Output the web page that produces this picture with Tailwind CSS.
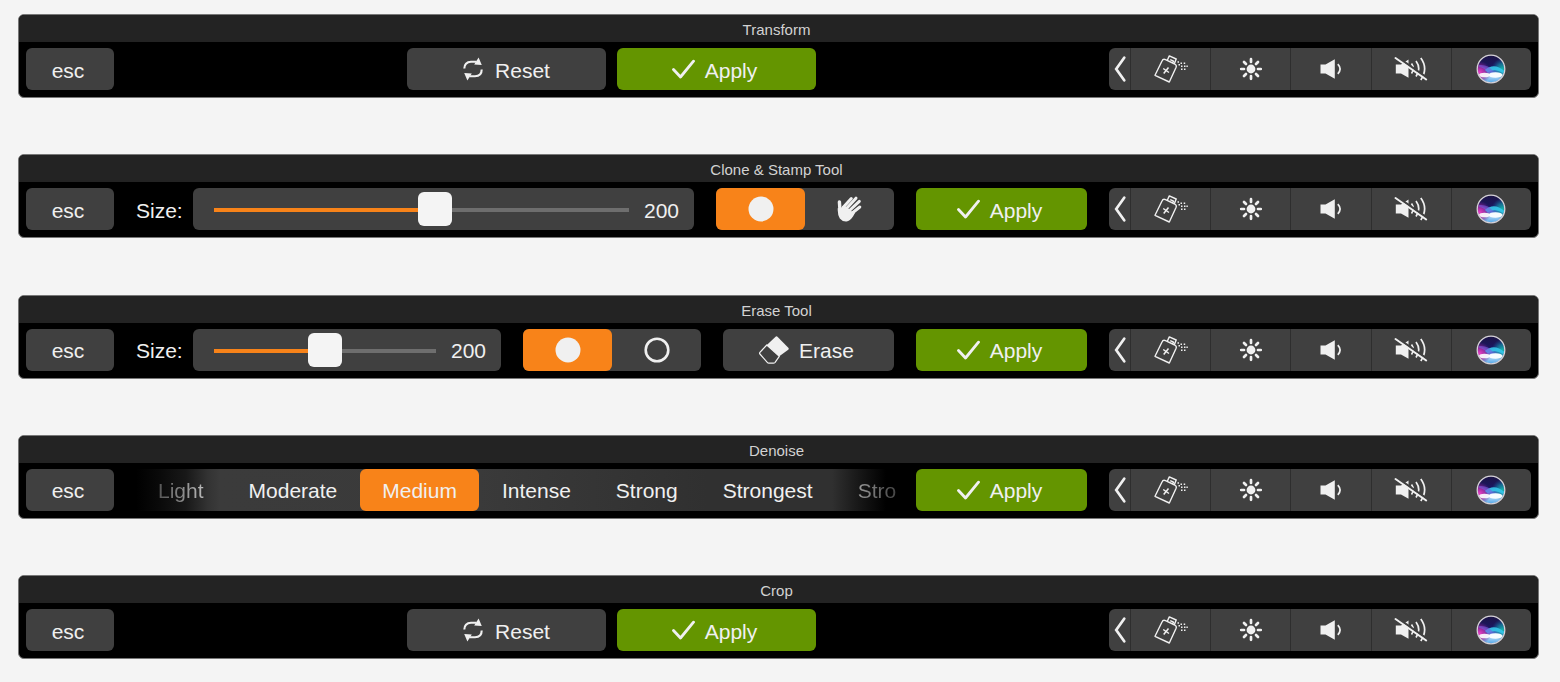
<!DOCTYPE html>
<html lang="en">
<head>
<meta charset="utf-8">
<meta name="viewport" content="width=device-width, initial-scale=1">
<title>Touch Bar layouts</title>
<script src="https://cdn.jsdelivr.net/npm/@tailwindcss/browser@4"></script>
</head>
<body class="bg-[#f4f4f4] font-['Liberation_Sans',Arial,sans-serif] text-[21px] leading-6 text-[#f0f0f0]">

<!-- Shared icons -->
<svg class="absolute size-0" aria-hidden="true">
  <defs>
    <radialGradient id="siri-pink" cx="0.08" cy="0.62" r="0.42"><stop offset="0" stop-color="#e83cc0"/><stop offset="0.5" stop-color="#a8259c" stop-opacity="0.8"/><stop offset="1" stop-color="#5a1a8a" stop-opacity="0"/></radialGradient>
    <radialGradient id="siri-teal" cx="0.92" cy="0.5" r="0.4"><stop offset="0" stop-color="#16b5a8"/><stop offset="0.5" stop-color="#158fa8" stop-opacity="0.7"/><stop offset="1" stop-color="#1560a0" stop-opacity="0"/></radialGradient>
    <linearGradient id="siri-base" x1="0" y1="0" x2="0" y2="1"><stop offset="0" stop-color="#1c1545"/><stop offset="0.4" stop-color="#1b1660"/><stop offset="0.6" stop-color="#5a6fd6"/><stop offset="0.75" stop-color="#b8dcf8"/><stop offset="1" stop-color="#55a8e8"/></linearGradient>
    <clipPath id="siri-clip"><circle cx="15" cy="15" r="13.5"/></clipPath>

    <symbol id="reset" viewBox="0 0 20 24">
      <path d="M1.3 11.500C1.300 7.500 3.600 4.800 8 4.800H13.500M18.700 12.500C18.700 16.500 16.400 19.200 12 19.200H6.500" fill="none" stroke="currentColor" stroke-width="2.100"/>
      <path d="M15.600 0.500L18.800 8L11.200 7.500ZM4.400 23.500L1.200 16L8.800 16.500Z" fill="currentColor"/>
    </symbol>
    <symbol id="check" viewBox="0 0 23 20">
      <path d="M1.500 10.500L8.500 18L21.500 2.200" fill="none" stroke="currentColor" stroke-width="2.800" stroke-linecap="round" stroke-linejoin="round"/>
    </symbol>
    <symbol id="eraser" viewBox="0 0 30 28">
      <path d="M16.300 0.900Q17.500 -0.200 18.700 0.900L29.300 11.700Q30.300 12.800 29.200 13.800L20.300 20.300L7.800 9Z" fill="currentColor"/>
      <path d="M7.800 9L0.900 16.400Q0.300 17.200 0.900 18L8.500 26.600Q9 27.200 9.800 27.200H14.500Q15.300 27.200 15.900 26.600L20.300 20.300Z" fill="none" stroke="currentColor" stroke-width="1.200" stroke-linejoin="round"/>
    </symbol>
    <symbol id="hand" viewBox="0 0 25 26">
      <g fill="none" stroke="currentColor" stroke-linecap="round">
        <path d="M2.400 6L3 14" stroke-width="3.400"/>
        <path d="M6.500 11L14.300 2.500" stroke-width="3"/>
        <path d="M9.500 12.500L19 2.200" stroke-width="3"/>
        <path d="M12 15L22.300 5.300" stroke-width="3"/>
        <path d="M14 18L22.800 11" stroke-width="3"/>
      </g>
      <path d="M0.800 12L4 11.500Q5 11.500 5.500 9.900L9 10.500L16.500 17L18 17L16 20.500Q13 24.800 9.500 25.500Q5.500 25.800 2.800 22.500Q0.800 19.500 0.700 14Z" fill="currentColor"/>
    </symbol>
    <symbol id="dot" viewBox="0 0 26 26"><circle cx="13" cy="13" r="12.500" fill="currentColor"/></symbol>
    <symbol id="ring" viewBox="0 0 26 26"><circle cx="13" cy="13" r="11.300" fill="none" stroke="currentColor" stroke-width="2.600"/></symbol>
    <symbol id="chevron" viewBox="0 0 12 26">
      <path d="M10.200 1.700L2.200 13L10.200 24.300" fill="none" stroke="currentColor" stroke-width="2.700" stroke-linecap="round"/>
    </symbol>
    <symbol id="spray" viewBox="0 0 34 28">
      <path d="M1 20.300L8 6Q9 3.600 11.500 4.600L20.800 9Q23 10.200 22 12.500L15.300 27Z M13.300 5.200L15.300 0.900L22.200 4L20.300 8.700M16.200 4.600L19.500 6.200L18.800 7.800" fill="none" stroke="currentColor" stroke-width="1.400" stroke-linejoin="round"/>
      <path d="M9.200 13.500L15 17.500M14.500 12.500L9.700 18.500" fill="none" stroke="currentColor" stroke-width="1.500"/>
      <path d="M23.500 7h1.500M24.500 9.800h1.500M26.500 8.200h1.500M27 11.200h1.500M27 14.200h1.500M29.700 8.200h1.500M30 11.200h1.500M30 14.200h1.500M32.400 11.200h1.400" stroke="currentColor" stroke-width="1.400"/>
    </symbol>
    <symbol id="sun" viewBox="0 0 24 24">
      <circle cx="12" cy="12" r="4.400" fill="currentColor"/>
      <path d="M12 2.200V5M12 19V21.800M2.200 12H5M19 12H21.800M5 5L7 7M17 17L19 19M5 19L7 17M17 7L19 5" stroke="currentColor" stroke-width="2.700" stroke-linecap="round"/>
    </symbol>
    <symbol id="volume" viewBox="0 0 22 20">
      <path d="M0.500 5.500H5.500L14.800 0.200V19.800L5.500 14.500H0.500Z" fill="currentColor"/>
      <path d="M17.800 5.200Q22.400 10 17.800 14.800" fill="none" stroke="currentColor" stroke-width="1.700"/>
    </symbol>
    <symbol id="mute" viewBox="0 0 34 26">
      <path d="M1.800 8.500H7L14.500 3.500V21.800L7 17.500H1.800Z" fill="currentColor"/>
      <path d="M17.500 7.500Q21 12.500 17.500 17.500M22 5Q27.500 12.500 22 20.500M26.800 2Q34.500 12.500 26.800 24" fill="none" stroke="currentColor" stroke-width="1.700"/>
      <path d="M2 0.300L33.500 22" stroke="#404040" stroke-width="2.400"/>
      <path d="M1.500 2L32.200 23.500" stroke="currentColor" stroke-width="2" stroke-linecap="round"/>
    </symbol>
    <symbol id="siri" viewBox="0 0 30 30">
      <circle cx="15" cy="15" r="13.500" fill="url(#siri-base)"/>
      <g clip-path="url(#siri-clip)">
        <circle cx="15" cy="15" r="13.500" fill="url(#siri-pink)"/>
        <circle cx="15" cy="15" r="13.500" fill="url(#siri-teal)"/>
        <path d="M9 16Q18 8 28.500 17L27 19Q19 14 12 18.500Z" fill="#35c6ea" fill-opacity="0.900"/>
        <path d="M3 11Q12 10 17 17L12 19Q9 14 3 13Z" fill="#7a5fe0" fill-opacity="0.600"/>
        <ellipse cx="8.500" cy="21" rx="5.500" ry="2.300" fill="#fff" fill-opacity="0.900"/>
        <ellipse cx="19.500" cy="21" rx="7" ry="2.800" fill="#f6fcff"/>
      </g>
      <circle cx="15" cy="15" r="13.800" fill="none" stroke="#d4d0d8" stroke-width="1.300"/>
    </symbol>
  </defs>
</svg>

<main class="flex min-h-screen flex-col justify-between gap-14 pt-3.5 pr-[21px] pb-[23px] pl-[18px]">

  <!-- Transform -->
  <section class="overflow-hidden rounded-md border border-[#777] bg-black">
    <h2 class="bg-[#232323] pt-[5px] pr-1 pb-0.5 text-center text-[15px] leading-5 text-[#d2d2d2]">Transform</h2>
    <div class="flex h-[55px] items-start gap-[22px] px-[7px] pt-1.5">
      <button class="h-[42px] w-[88px] shrink-0 rounded-md bg-[#404040] pt-[3px] pr-1">esc</button>
      <div class="flex flex-1 justify-center gap-[11px]">
        <button class="flex h-[42px] w-[199px] items-center justify-center gap-3 rounded-md bg-[#404040]"><svg class="h-6 w-5"><use href="#reset"/></svg><span class="pt-[3px]">Reset</span></button>
        <button class="flex h-[42px] w-[199px] items-center justify-center gap-2.5 rounded-md bg-[#649500] pr-1"><svg class="h-5 w-[23px]"><use href="#check"/></svg><span class="pt-[3px]">Apply</span></button>
      </div>
      <div class="flex h-[42px] w-[422px] shrink-0 divide-x divide-[#2e2e2e] overflow-hidden rounded-md bg-[#404040]">
        <button class="grid w-[22px] place-items-center" aria-label="Expand control strip"><svg class="h-[26px] w-3"><use href="#chevron"/></svg></button>
        <button class="grid flex-1 place-items-center" aria-label="Spray"><svg class="h-7 w-[34px]"><use href="#spray"/></svg></button>
        <button class="grid flex-1 place-items-center" aria-label="Brightness"><svg class="size-6"><use href="#sun"/></svg></button>
        <button class="grid flex-1 place-items-center" aria-label="Volume"><svg class="h-5 w-[22px]"><use href="#volume"/></svg></button>
        <button class="grid flex-1 place-items-center" aria-label="Mute"><svg class="h-[26px] w-[34px]"><use href="#mute"/></svg></button>
        <button class="grid flex-1 place-items-center" aria-label="Siri"><svg class="size-[30px]"><use href="#siri"/></svg></button>
      </div>
    </div>
  </section>

  <!-- Clone & Stamp Tool -->
  <section class="overflow-hidden rounded-md border border-[#777] bg-black">
    <h2 class="bg-[#232323] pt-[5px] pr-1 pb-0.5 text-center text-[15px] leading-5 text-[#d2d2d2]">Clone &amp; Stamp Tool</h2>
    <div class="flex h-[55px] items-start gap-[22px] px-[7px] pt-1.5">
      <button class="h-[42px] w-[88px] shrink-0 rounded-md bg-[#404040] pt-[3px] pr-1">esc</button>
      <div class="flex flex-1 items-center gap-2.5">
        <label for="clone-size" class="pt-[3px]">Size:</label>
        <div class="flex h-[42px] flex-1 items-center gap-[15px] rounded-md bg-[#404040] pr-[15px] pl-[21px]">
          <input id="clone-size" type="range" min="0" max="373" value="200" style="--fill:53%" class="h-[34px] min-w-0 flex-1 appearance-none bg-transparent bg-[linear-gradient(to_right,#f88319_var(--fill),#6e6e6e_var(--fill))] bg-[length:100%_4px] bg-[position:0_16px] bg-no-repeat [&::-webkit-slider-thumb]:size-[34px] [&::-webkit-slider-thumb]:appearance-none [&::-webkit-slider-thumb]:rounded-md [&::-webkit-slider-thumb]:bg-[#f4f4f4]">
          <output for="clone-size" class="pt-[3px]">200</output>
        </div>
      </div>
      <div class="flex h-[42px] w-[178px] shrink-0 rounded-md bg-[#404040]" role="group" aria-label="Mode">
        <button class="grid flex-1 place-items-center rounded-md bg-[#f88319]" aria-label="Brush" aria-pressed="true"><svg class="size-[26px]"><use href="#dot"/></svg></button>
        <button class="grid flex-1 place-items-center" aria-label="Pan" aria-pressed="false"><svg class="h-[26px] w-[25px]"><use href="#hand"/></svg></button>
      </div>
      <button class="flex h-[42px] w-[171px] shrink-0 items-center justify-center gap-2.5 rounded-md bg-[#649500] pr-1"><svg class="h-5 w-[23px]"><use href="#check"/></svg><span class="pt-[3px]">Apply</span></button>
      <div class="flex h-[42px] w-[422px] shrink-0 divide-x divide-[#2e2e2e] overflow-hidden rounded-md bg-[#404040]">
        <button class="grid w-[22px] place-items-center" aria-label="Expand control strip"><svg class="h-[26px] w-3"><use href="#chevron"/></svg></button>
        <button class="grid flex-1 place-items-center" aria-label="Spray"><svg class="h-7 w-[34px]"><use href="#spray"/></svg></button>
        <button class="grid flex-1 place-items-center" aria-label="Brightness"><svg class="size-6"><use href="#sun"/></svg></button>
        <button class="grid flex-1 place-items-center" aria-label="Volume"><svg class="h-5 w-[22px]"><use href="#volume"/></svg></button>
        <button class="grid flex-1 place-items-center" aria-label="Mute"><svg class="h-[26px] w-[34px]"><use href="#mute"/></svg></button>
        <button class="grid flex-1 place-items-center" aria-label="Siri"><svg class="size-[30px]"><use href="#siri"/></svg></button>
      </div>
    </div>
  </section>

  <!-- Erase Tool -->
  <section class="overflow-hidden rounded-md border border-[#777] bg-black">
    <h2 class="bg-[#232323] pt-[5px] pr-1 pb-0.5 text-center text-[15px] leading-5 text-[#d2d2d2]">Erase Tool</h2>
    <div class="flex h-[55px] items-start gap-[22px] px-[7px] pt-1.5">
      <button class="h-[42px] w-[88px] shrink-0 rounded-md bg-[#404040] pt-[3px] pr-1">esc</button>
      <div class="flex flex-1 items-center gap-2.5">
        <label for="erase-size" class="pt-[3px]">Size:</label>
        <div class="flex h-[42px] flex-1 items-center gap-[15px] rounded-md bg-[#404040] pr-[15px] pl-[21px]">
          <input id="erase-size" type="range" min="0" max="398" value="200" style="--fill:50%" class="h-[34px] min-w-0 flex-1 appearance-none bg-transparent bg-[linear-gradient(to_right,#f88319_var(--fill),#6e6e6e_var(--fill))] bg-[length:100%_4px] bg-[position:0_16px] bg-no-repeat [&::-webkit-slider-thumb]:size-[34px] [&::-webkit-slider-thumb]:appearance-none [&::-webkit-slider-thumb]:rounded-md [&::-webkit-slider-thumb]:bg-[#f4f4f4]">
          <output for="erase-size" class="pt-[3px]">200</output>
        </div>
      </div>
      <div class="flex h-[42px] w-[178px] shrink-0 rounded-md bg-[#404040]" role="group" aria-label="Mode">
        <button class="grid flex-1 place-items-center rounded-md bg-[#f88319]" aria-label="Filled brush" aria-pressed="true"><svg class="size-[26px]"><use href="#dot"/></svg></button>
        <button class="grid flex-1 place-items-center" aria-label="Outlined brush" aria-pressed="false"><svg class="size-[26px]"><use href="#ring"/></svg></button>
      </div>
      <button class="flex h-[42px] w-[171px] shrink-0 items-center justify-center gap-2.5 rounded-md bg-[#404040] pr-1"><svg class="h-7 w-[30px]"><use href="#eraser"/></svg><span class="pt-[3px]">Erase</span></button>
      <button class="flex h-[42px] w-[171px] shrink-0 items-center justify-center gap-2.5 rounded-md bg-[#649500] pr-1"><svg class="h-5 w-[23px]"><use href="#check"/></svg><span class="pt-[3px]">Apply</span></button>
      <div class="flex h-[42px] w-[422px] shrink-0 divide-x divide-[#2e2e2e] overflow-hidden rounded-md bg-[#404040]">
        <button class="grid w-[22px] place-items-center" aria-label="Expand control strip"><svg class="h-[26px] w-3"><use href="#chevron"/></svg></button>
        <button class="grid flex-1 place-items-center" aria-label="Spray"><svg class="h-7 w-[34px]"><use href="#spray"/></svg></button>
        <button class="grid flex-1 place-items-center" aria-label="Brightness"><svg class="size-6"><use href="#sun"/></svg></button>
        <button class="grid flex-1 place-items-center" aria-label="Volume"><svg class="h-5 w-[22px]"><use href="#volume"/></svg></button>
        <button class="grid flex-1 place-items-center" aria-label="Mute"><svg class="h-[26px] w-[34px]"><use href="#mute"/></svg></button>
        <button class="grid flex-1 place-items-center" aria-label="Siri"><svg class="size-[30px]"><use href="#siri"/></svg></button>
      </div>
    </div>
  </section>

  <!-- Denoise -->
  <section class="overflow-hidden rounded-md border border-[#777] bg-black">
    <h2 class="bg-[#232323] pt-[5px] pr-1 pb-0.5 text-center text-[15px] leading-5 text-[#d2d2d2]">Denoise</h2>
    <div class="flex h-[55px] items-start gap-[22px] px-[7px] pt-1.5">
      <button class="h-[42px] w-[88px] shrink-0 rounded-md bg-[#404040] pt-[3px] pr-1">esc</button>
      <div class="-mr-1 flex h-[42px] min-w-0 flex-1 gap-px overflow-hidden bg-[linear-gradient(to_right,#000_0,#0a0a0a_24px,#181818_50px,#333_72px,#3b3b3b_84px,#3a3a3a_45%,#303030_75%,#303030_calc(100%-66px),#1a1a1a_calc(100%-42px),#000_calc(100%-12px))]" role="group" aria-label="Strength">
        <button class="shrink-0 px-[22px] pt-[3px]"><span class="bg-linear-to-r from-[#555] to-[#bbb] bg-clip-text text-transparent">Light</span></button>
        <button class="shrink-0 px-[22px] pt-[3px]">Moderate</button>
        <button class="shrink-0 rounded-md bg-[#f88319] px-[22px] pt-[3px]" aria-pressed="true">Medium</button>
        <button class="shrink-0 px-[22px] pt-[3px]">Intense</button>
        <button class="shrink-0 px-[22px] pt-[3px]">Strong</button>
        <button class="shrink-0 px-[22px] pt-[3px]">Strongest</button>
        <button class="shrink-0 pt-[3px] pl-[22px]"><span class="bg-linear-to-r from-[#999] to-[#444] bg-clip-text text-transparent">Stro</span></button>
      </div>
      <button class="flex h-[42px] w-[171px] shrink-0 items-center justify-center gap-2.5 rounded-md bg-[#649500] pr-1"><svg class="h-5 w-[23px]"><use href="#check"/></svg><span class="pt-[3px]">Apply</span></button>
      <div class="flex h-[42px] w-[422px] shrink-0 divide-x divide-[#2e2e2e] overflow-hidden rounded-md bg-[#404040]">
        <button class="grid w-[22px] place-items-center" aria-label="Expand control strip"><svg class="h-[26px] w-3"><use href="#chevron"/></svg></button>
        <button class="grid flex-1 place-items-center" aria-label="Spray"><svg class="h-7 w-[34px]"><use href="#spray"/></svg></button>
        <button class="grid flex-1 place-items-center" aria-label="Brightness"><svg class="size-6"><use href="#sun"/></svg></button>
        <button class="grid flex-1 place-items-center" aria-label="Volume"><svg class="h-5 w-[22px]"><use href="#volume"/></svg></button>
        <button class="grid flex-1 place-items-center" aria-label="Mute"><svg class="h-[26px] w-[34px]"><use href="#mute"/></svg></button>
        <button class="grid flex-1 place-items-center" aria-label="Siri"><svg class="size-[30px]"><use href="#siri"/></svg></button>
      </div>
    </div>
  </section>

  <!-- Crop -->
  <section class="overflow-hidden rounded-md border border-[#777] bg-black">
    <h2 class="bg-[#232323] pt-[5px] pr-1 pb-0.5 text-center text-[15px] leading-5 text-[#d2d2d2]">Crop</h2>
    <div class="flex h-[55px] items-start gap-[22px] px-[7px] pt-1.5">
      <button class="h-[42px] w-[88px] shrink-0 rounded-md bg-[#404040] pt-[3px] pr-1">esc</button>
      <div class="flex flex-1 justify-center gap-[11px]">
        <button class="flex h-[42px] w-[199px] items-center justify-center gap-3 rounded-md bg-[#404040]"><svg class="h-6 w-5"><use href="#reset"/></svg><span class="pt-[3px]">Reset</span></button>
        <button class="flex h-[42px] w-[199px] items-center justify-center gap-2.5 rounded-md bg-[#649500] pr-1"><svg class="h-5 w-[23px]"><use href="#check"/></svg><span class="pt-[3px]">Apply</span></button>
      </div>
      <div class="flex h-[42px] w-[422px] shrink-0 divide-x divide-[#2e2e2e] overflow-hidden rounded-md bg-[#404040]">
        <button class="grid w-[22px] place-items-center" aria-label="Expand control strip"><svg class="h-[26px] w-3"><use href="#chevron"/></svg></button>
        <button class="grid flex-1 place-items-center" aria-label="Spray"><svg class="h-7 w-[34px]"><use href="#spray"/></svg></button>
        <button class="grid flex-1 place-items-center" aria-label="Brightness"><svg class="size-6"><use href="#sun"/></svg></button>
        <button class="grid flex-1 place-items-center" aria-label="Volume"><svg class="h-5 w-[22px]"><use href="#volume"/></svg></button>
        <button class="grid flex-1 place-items-center" aria-label="Mute"><svg class="h-[26px] w-[34px]"><use href="#mute"/></svg></button>
        <button class="grid flex-1 place-items-center" aria-label="Siri"><svg class="size-[30px]"><use href="#siri"/></svg></button>
      </div>
    </div>
  </section>

</main>
</body>
</html>
